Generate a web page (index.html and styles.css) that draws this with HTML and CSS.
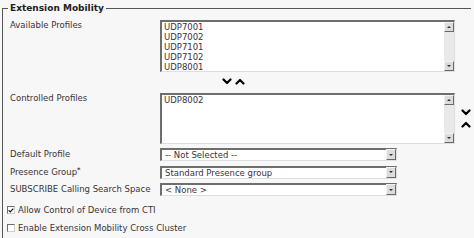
FILE: index.html
```html
<!DOCTYPE html>
<html lang="en">

<head>
    <meta charset="UTF-8">
    <title>Extension Mobility</title>
    <link rel="stylesheet" href="styles.css">
</head>

<body>

    <fieldset class="panel">
        <legend>Extension Mobility</legend>

        <div class="row">
            <div class="lbl">Available Profiles</div>
            <div class="listbox">
                <div class="items">
                    <div>UDP7001</div>
                    <div>UDP7002</div>
                    <div>UDP7101</div>
                    <div>UDP7102</div>
                    <div>UDP8001</div>
                </div>
                <div class="vscroll">
                    <span class="sbtn"><i class="tri-up"></i></span>
                    <span class="sbtn"><i class="tri-down"></i></span>
                </div>
            </div>
        </div>

        <div class="movers">
            <svg class="chev" width="10" height="7" viewBox="0 0 10 7"><polyline points="1.5,1.5 5,5 8.5,1.5" /></svg>
            <svg class="chev" width="10" height="7" viewBox="0 0 10 7"><polyline points="1.5,5.5 5,2 8.5,5.5" /></svg>
        </div>

        <div class="row">
            <div class="lbl">Controlled Profiles</div>
            <div class="listbox tall">
                <div class="items">
                    <div>UDP8002</div>
                </div>
                <div class="vscroll">
                    <span class="sbtn"><i class="tri-up"></i></span>
                    <span class="sbtn"><i class="tri-down"></i></span>
                </div>
            </div>
            <div class="order">
                <svg class="chev" width="10" height="7" viewBox="0 0 10 7"><polyline points="1.5,1.5 5,5 8.5,1.5" /></svg>
                <svg class="chev" width="10" height="7" viewBox="0 0 10 7"><polyline points="1.5,5.5 5,2 8.5,5.5" /></svg>
            </div>
        </div>

        <div class="selects">
            <div class="row sel-row">
                <div class="lbl">Default Profile</div>
                <div class="select"><span>-- Not Selected --</span><span class="dd"><i class="tri-down"></i></span></div>
            </div>
            <div class="row sel-row">
                <div class="lbl">Presence Group<sup>*</sup></div>
                <div class="select"><span>Standard Presence group</span><span class="dd"><i class="tri-down"></i></span></div>
            </div>
            <div class="row sel-row">
                <div class="lbl">SUBSCRIBE Calling Search Space</div>
                <div class="select"><span>&lt; None &gt;</span><span class="dd"><i class="tri-down"></i></span></div>
            </div>
        </div>

        <div class="check">
            <span class="box">
                <svg width="7" height="7" viewBox="0 0 7 7"><polyline points="0.8,3.3 2.6,5.2 6.2,1.2" /></svg>
            </span>
            Allow Control of Device from CTI
        </div>
        <div class="check">
            <span class="box"></span>
            Enable Extension Mobility Cross Cluster
        </div>
    </fieldset>

</body>

</html>
```

FILE: styles.css
```css
body {
    margin: 0;
    width: 474px;
    height: 238px;
    overflow: hidden;
    background-color: #f7f7f7;
    font-family: 'DejaVu Sans', Verdana, sans-serif;
    font-size: 8.5px;
    color: #3a3339;
}

.panel {
    margin: 2px 0 0 2px;
    padding: 6px 0 0 7px;
    width: 464px;
    height: 236px;
    box-sizing: border-box;
    border: 1px solid #555;
    border-right: none;
    border-bottom: none;
}

legend {
    margin-left: -2px;
    padding: 0 2px;
    font-size: 9px;
    font-weight: bold;
    line-height: 12px;
    color: #222;
}

.row {
    display: flex;
    align-items: flex-start;
}

.lbl {
    width: 150px;
    flex: none;
    line-height: 11px;
}

.lbl sup {
    font-size: 6.5px;
    font-weight: bold;
    vertical-align: 3px;
    line-height: 0;
}

.listbox {
    display: flex;
    width: 295px;
    height: 52px;
    box-sizing: border-box;
    background-color: #fff;
    border-top: 2px solid #6e6e6e;
    border-left: 2px solid #6e6e6e;
    border-right: 1px solid #dedede;
    border-bottom: 1px solid #dedede;
}

.listbox.tall {
    height: 51px;
}

.items {
    flex: 1;
    padding-left: 2px;
    line-height: 10px;
    color: #3d3040;
}

.vscroll {
    width: 10px;
    display: flex;
    flex-direction: column;
    justify-content: space-between;
    background-color: #e9e9e9;
}

.sbtn,
.dd {
    width: 10px;
    height: 10px;
    box-sizing: border-box;
    display: flex;
    align-items: center;
    justify-content: center;
    background-color: #dcdcd8;
    border-top: 1px solid #f4f4f4;
    border-left: 1px solid #f4f4f4;
    border-right: 1px solid #6a6a6a;
    border-bottom: 1px solid #6a6a6a;
}

.tri-up,
.tri-down {
    width: 0;
    height: 0;
    border-left: 2px solid transparent;
    border-right: 2px solid transparent;
}

.tri-up {
    border-bottom: 2px solid #333;
}

.tri-down {
    border-top: 2px solid #333;
}

.chev {
    display: block;
}

.chev polyline {
    fill: none;
    stroke: #000;
    stroke-width: 2.2;
    stroke-linecap: round;
    stroke-linejoin: round;
}

.movers {
    display: flex;
    gap: 3px;
    height: 21px;
    padding: 6px 0 0 212px;
    box-sizing: border-box;
}

.order {
    display: flex;
    flex-direction: column;
    gap: 5px;
    margin: 16px 0 0 6px;
}

.selects {
    display: flex;
    flex-direction: column;
    gap: 4.5px;
    margin-top: 4px;
}

.sel-row {
    align-items: center;
}

.select {
    width: 237px;
    height: 13px;
    box-sizing: border-box;
    display: flex;
    align-items: center;
    justify-content: space-between;
    padding-left: 3px;
    background-color: #fff;
    border-top: 2px solid #6e6e6e;
    border-left: 2px solid #6e6e6e;
    border-right: 1px solid #dedede;
    border-bottom: 1px solid #dedede;
    color: #3d3040;
}

.select .dd {
    height: 11px;
    margin-top: -1px;
}

.check {
    display: flex;
    align-items: center;
    gap: 3px;
    height: 18px;
    margin-left: -3px;
}

.selects + .check {
    margin-top: 5px;
}

.box {
    width: 8px;
    height: 8px;
    box-sizing: border-box;
    display: flex;
    align-items: center;
    justify-content: center;
    background-color: #fff;
    border-top: 1px solid #6e6e6e;
    border-left: 1px solid #6e6e6e;
    border-right: 1px solid #cfcfcf;
    border-bottom: 1px solid #cfcfcf;
}

.box polyline {
    fill: none;
    stroke: #111;
    stroke-width: 1.4;
}
```
